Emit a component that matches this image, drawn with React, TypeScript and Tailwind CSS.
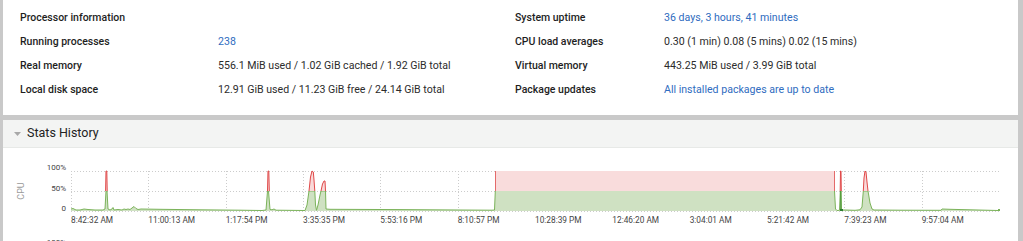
import React from 'react';

const font = { fontFamily: 'Roboto, "Liberation Sans", sans-serif' };

interface InfoRow {
  label: string;
  value: string;
  link?: boolean;
  label2: string;
  value2: string;
  link2?: boolean;
}

const rows: InfoRow[] = [
  { label: 'Processor information', value: '', label2: 'System uptime', value2: '36 days, 3 hours, 41 minutes', link2: true },
  { label: 'Running processes', value: '238', link: true, label2: 'CPU load averages', value2: '0.30 (1 min) 0.08 (5 mins) 0.02 (15 mins)' },
  { label: 'Real memory', value: '556.1 MiB used / 1.02 GiB cached / 1.92 GiB total', label2: 'Virtual memory', value2: '443.25 MiB used / 3.99 GiB total' },
  { label: 'Local disk space', value: '12.91 GiB used / 11.23 GiB free / 24.14 GiB total', label2: 'Package updates', value2: 'All installed packages are up to date', link2: true },
];

const times = [
  '8:42:32 AM', '11:00:13 AM', '1:17:54 PM', '3:35:35 PM', '5:53:16 PM', '8:10:57 PM',
  '10:28:39 PM', '12:46:20 AM', '3:04:01 AM', '5:21:42 AM', '7:39:23 AM', '9:57:04 AM',
];

// page coordinates: plot spans x 71..999, y 171 (100%) .. 211 (0)
const greenA: [number, number][] = [
  [71, 209], [73, 208.5], [76, 210], [80, 210], [84, 209], [88, 209.5], [95, 210], [103, 210], [105, 209],
  [106, 191], [107, 191], [108, 209], [110, 210], [112, 209], [113, 207.5], [114, 210], [118, 209.5],
  [122, 210], [124, 209], [126, 209.5], [128, 209], [130, 209.5], [132, 208], [134, 206.5], [136, 208.5],
  [138, 209.5], [141, 209], [160, 209.3], [200, 209.8], [240, 210.2], [262, 210.5], [266, 210],
  [267.5, 191], [268.5, 191], [270, 209.5], [272, 209.8], [274, 209], [276, 210.2], [305, 210.5],
  [307, 205], [309, 191], [314.8, 191], [315.5, 205], [316.5, 210.3], [318, 205], [320, 195], [321, 191],
  [325.5, 191], [326, 209], [330, 209.3], [400, 209.6], [460, 210], [492, 210.2], [494.5, 210],
  [495.3, 191],
];
const greenB: [number, number][] = [
  [834.5, 191], [835.5, 209], [837, 210.5], [839.5, 210.3], [840.3, 191], [841, 191],
  [841.5, 210], [845, 210], [855, 210.3], [860, 209.8], [862, 207], [863.3, 191], [868, 191],
  [870, 203], [872, 209], [874, 210], [900, 210.2], [941, 210.3], [942, 209], [950, 209.3],
  [970, 209.8], [998, 210.5], [999, 209.5],
];

const redParts: [number, number][][] = [
  [[105.6, 191], [106, 171], [106.8, 171], [107.2, 191]],
  [[267.5, 191], [268, 171], [268.8, 171], [269.3, 191]],
  [[309, 191], [310.5, 177], [312, 171], [313.3, 172], [314, 180], [314.8, 191]],
  [[321, 191], [322.5, 184], [324, 181], [325, 181], [325.5, 191]],
  [[840.2, 191], [840.5, 171], [841, 171], [841.3, 191]],
  [[863.3, 191], [864, 178], [865, 171], [866, 172], [867, 182], [868, 191]],
];

const pts = (p: [number, number][]) => p.map(([x, y]) => `${x},${y}`).join(' ');

function CpuChart() {
  const grid = Array.from({ length: 12 }, (_, i) => 71 + i * (850.7 / 11));
  return (
    <svg width="1015" height="102" viewBox="3 148 1015 102" className="block" style={font}>
      {/* grid */}
      {[171.5, 191.5, 211.5].map((y) => (
        <line key={y} x1="71" x2="999" y1={y} y2={y} stroke="#cccccc" strokeDasharray="1 2" />
      ))}
      {grid.map((x) => (
        <line key={x} x1={Math.round(x) + 0.5} x2={Math.round(x) + 0.5} y1="171" y2="212" stroke="#cccccc" strokeDasharray="1 2" />
      ))}

      {/* green series */}
      <polygon points={`71,211 ${pts(greenA)} ${pts(greenB)} 999,211`} fill="#cfe1c2" />
      <polyline points={pts(greenA)} fill="none" stroke="#7bb35a" strokeWidth="1" />
      <polyline points={pts(greenB)} fill="none" stroke="#7bb35a" strokeWidth="1" />

      {/* red series */}
      <rect x="495.3" y="171" width="339.2" height="20" fill="#f9dcdc" />
      <line x1="495.5" x2="495.5" y1="171" y2="191" stroke="#e46a6a" />
      <line x1="834.5" x2="834.5" y1="171" y2="191" stroke="#e46a6a" />
      {redParts.map((p, i) => (
        <g key={i}>
          <polygon points={pts(p)} fill="#f9d9d9" />
          <polyline points={pts(p)} fill="none" stroke="#e04848" strokeWidth="1" />
        </g>
      ))}
      <line x1="840.8" x2="840.8" y1="191" y2="211" stroke="#3f8f2a" strokeWidth="1" />
      <rect x="840" y="209" width="3" height="2" fill="#2e7d32" />
      <rect x="998" y="209" width="2" height="2" fill="#7bb35a" />

      {/* axes labels */}
      <text x="22" y="191" fill="#999999" fontSize="9" textAnchor="middle" dominantBaseline="middle" transform="rotate(-90 22 191)">
        CPU
      </text>
      <text x="66" y="170" fill="#444444" fontSize="8" textAnchor="end">100%</text>
      <text x="66" y="191" fill="#444444" fontSize="8" textAnchor="end">50%</text>
      <text x="66" y="211" fill="#444444" fontSize="8" textAnchor="end">0</text>
      {times.map((t, i) => (
        <text key={t} x={grid[i]} y="223" fill="#444444" fontSize="8.3">
          {t}
        </text>
      ))}
      <text x="66" y="245" fill="#444444" fontSize="8" textAnchor="end">100%</text>
    </svg>
  );
}

export default function App() {
  return (
    <div className="min-h-screen bg-[#c9c9c9] pl-[3px] pr-[5px]" style={font}>
      {/* System info */}
      <div className="h-[115px] bg-white pl-[17px] pt-[6px]">
        <div className="grid grid-cols-[198px_297px_149px_1fr] text-[10.6px]">
          {rows.map((r) => (
            <React.Fragment key={r.label}>
              <div className="flex h-6 items-center text-[10.5px] font-medium text-[#1e1e1e]">{r.label}</div>
              <div className={`flex h-6 items-center ${r.link ? 'text-[#2f6cc0]' : 'text-[#2c2c2c]'}`}>{r.value}</div>
              <div className="flex h-6 items-center text-[10.5px] font-medium text-[#1e1e1e]">{r.label2}</div>
              <div className={`flex h-6 items-center ${r.link2 ? 'text-[#2f6cc0]' : 'text-[#2c2c2c]'}`}>{r.value2}</div>
            </React.Fragment>
          ))}
        </div>
      </div>

      {/* Stats History */}
      <div className="mt-[5px] bg-white">
        <div className="flex h-[28px] items-center border-b border-[#e7e9e7] bg-[#f3f4f3]">
          <svg width="7" height="4" viewBox="0 0 7 4" className="ml-[11px] mr-[6px]">
            <polygon points="0,0 7,0 3.5,4" fill="#a8a8a8" />
          </svg>
          <span className="text-[12.5px] text-[#222222]">Stats History</span>
        </div>
        <CpuChart />
      </div>
    </div>
  );
}
